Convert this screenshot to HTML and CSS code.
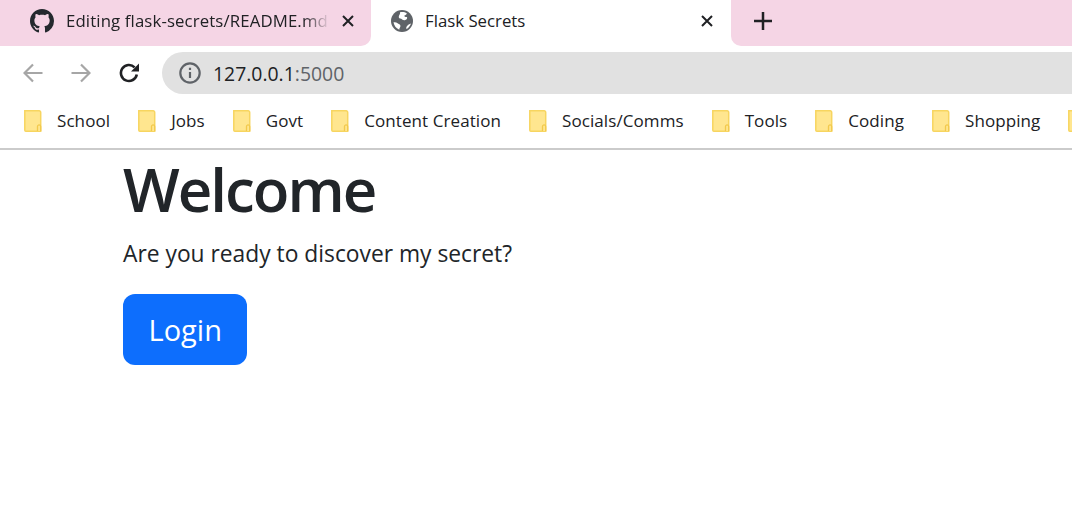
FILE: index.html
```html
<!DOCTYPE html>
<html lang="en">
<head>
<meta charset="utf-8">
<title>Flask Secrets</title>
<link rel="stylesheet" href="styles.css">
</head>
<body>
<header class="chrome">
  <div class="tabstrip">
    <div class="tab tab-inactive">
      <svg class="favicon" viewBox="0 0 16 16"><path fill="#24292e" d="M8 0C3.58 0 0 3.58 0 8c0 3.54 2.29 6.53 5.47 7.59.4.07.55-.17.55-.38 0-.19-.01-.82-.01-1.49-2.01.37-2.53-.49-2.69-.94-.09-.23-.48-.94-.82-1.13-.28-.15-.68-.52-.01-.53.63-.01 1.08.58 1.23.82.72 1.21 1.87.87 2.33.66.07-.52.28-.87.51-1.07-1.78-.2-3.64-.89-3.64-3.95 0-.87.31-1.59.82-2.15-.08-.2-.36-1.02.08-2.12 0 0 .67-.21 2.2.82.64-.18 1.32-.27 2-.27s1.36.09 2 .27c1.53-1.04 2.2-.82 2.2-.82.44 1.1.16 1.92.08 2.12.51.56.82 1.27.82 2.15 0 3.07-1.87 3.75-3.65 3.95.29.25.54.73.54 1.48 0 1.07-.01 1.93-.01 2.2 0 .21.15.46.55.38A8.01 8.01 0 0 0 16 8c0-4.42-3.58-8-8-8z"/></svg>
      <span class="tab-title tab-title-long">Editing flask-secrets/README.md</span>
      <svg class="close" viewBox="0 0 12 12"><path d="M1 1l10 10M11 1L1 11"/></svg>
    </div>
    <div class="tab tab-active">
      <svg class="favicon globe" viewBox="0 0 22 22"><circle cx="11" cy="11" r="11" fill="#5f6368"/><path fill="#fff" d="M9 2.2c2.2-.6 5-.3 6.8 1-.3 1.500-1.400 2-2.400 2.300-.3 1.300 1 1.500 2.400 1.500 1.100 1.200-.5 3.100-2 3.200-2.300.2-2.900-1.300-4.600-1.600-1.400-.2-1.700-1.600-1.200-2.900C8.300 4.800 9.400 3.700 9 2.200zM2.500 12.300c1.500-.4 3-.1 4.100 1 1 1 2.300.9 2.700 2 .4 1.300-.3 2.300-.9 3.100.3 1-.1 1.300-.5 1.100-2.800-1-4.900-4-5.400-7.200zM20 13.500c-.6 2.200-2.300 4.300-4.300 5.400-.8-.6-.5-2 .4-3 .7-1 2.200-2 3.900-2.400z"/></svg>
      <span class="tab-title">Flask Secrets</span>
      <svg class="close" viewBox="0 0 12 12"><path d="M1 1l10 10M11 1L1 11"/></svg>
    </div>
    <div class="tab-rest">
      <svg class="plus" viewBox="0 0 18 18"><path d="M9 0v18M0 9h18"/></svg>
    </div>
  </div>
  <div class="toolbar">
    <svg class="nav nav-off" viewBox="0 0 20 20"><path d="M19.500 10H2M10 1.500L1.500 10l8.500 8.500"/></svg>
    <svg class="nav nav-off" viewBox="0 0 20 20"><path d="M.5 10H18M10 1.500l8.500 8.500-8.500 8.500"/></svg>
    <svg class="nav nav-on" viewBox="0 0 20 20"><path class="reload-arc" d="M17.800 11.500A8 8 0 1 1 15.600 4.300"/><path class="reload-head" d="M20 .5v8h-8z"/></svg>
    <div class="omnibox">
      <svg class="info" viewBox="0 0 20 20"><circle cx="10" cy="10" r="8.800"/><path d="M10 9v5.500M10 5.200v2"/></svg>
      <span class="url">127.0.0.1<span class="port">:5000</span></span>
    </div>
  </div>
  <nav class="bookmarks">
    <a class="bookmark"><svg class="folder" viewBox="0 0 18 22"><use href="#f"/></svg><span class="bookmark-label">School</span></a>
    <a class="bookmark"><svg class="folder" viewBox="0 0 18 22"><use href="#f"/></svg><span class="bookmark-label">Jobs</span></a>
    <a class="bookmark"><svg class="folder" viewBox="0 0 18 22"><use href="#f"/></svg><span class="bookmark-label">Govt</span></a>
    <a class="bookmark"><svg class="folder" viewBox="0 0 18 22"><use href="#f"/></svg><span class="bookmark-label">Content Creation</span></a>
    <a class="bookmark"><svg class="folder" viewBox="0 0 18 22"><use href="#f"/></svg><span class="bookmark-label">Socials/Comms</span></a>
    <a class="bookmark"><svg class="folder" viewBox="0 0 18 22"><use href="#f"/></svg><span class="bookmark-label">Tools</span></a>
    <a class="bookmark"><svg class="folder" viewBox="0 0 18 22"><use href="#f"/></svg><span class="bookmark-label">Coding</span></a>
    <a class="bookmark"><svg class="folder" viewBox="0 0 18 22"><use href="#f"/></svg><span class="bookmark-label">Shopping</span></a>
    <a class="bookmark"><svg class="folder" viewBox="0 0 18 22"><use href="#f"/></svg></a>
  </nav>
  <svg class="defs" width="0" height="0"><defs><g id="f"><path fill="#ffe68f" stroke="#f7d560" stroke-width="1.500" d="M.8.8h14.400a1.500 1.500 0 0 1 1.500 1.500v18.900H1.800a1 1 0 0 1-1-1z"/><path fill="#ffe68f" stroke="#f2c94c" stroke-width="1.300" d="M13.500 21v-4.500a1.600 1.600 0 0 1 3.200 0V21"/></g></defs></svg>
</header>
<main class="content">
  <h1 class="title">Welcome</h1>
  <p class="lead">Are you ready to discover my secret?</p>
  <a class="btn">Login</a>
</main>
</body>
</html>
```
FILE: styles.css
```css
* { box-sizing: border-box; }
html, body { margin: 0; height: 100%; overflow: hidden; background: #fff; }
body { font-family: "Open Sans", "Noto Sans", sans-serif; color: #212529; }
.chrome { height: 150px; border-bottom: 2px solid #cbcbcb; }
.tabstrip { display: flex; height: 46px; color: #202124; }
.tab { display: flex; align-items: center; padding-bottom: 4px; }
.tab-inactive { width: 371px; padding-left: 30px; background: #f5d5e5; border-radius: 0 0 10px 0; }
.tab-active { width: 360px; padding-left: 20px; background: #fff; }
.tab-rest { flex: 1; display: flex; align-items: center; padding: 0 0 4px 23px; background: #f5d5e5; border-radius: 0 0 0 10px; }
.favicon { width: 24px; height: 24px; flex: none; }
.globe { width: 22px; height: 22px; }
.tab-title { margin-left: 12px; padding-bottom: 2px; font-size: 16.800px; white-space: nowrap; overflow: hidden; width: 264px; }
.tab-title-long { letter-spacing: .12px; -webkit-mask-image: linear-gradient(to right, #000 90%, transparent 100%); mask-image: linear-gradient(to right, #000 90%, transparent 100%); }
.close { width: 12px; height: 12px; margin-left: 12px; flex: none; fill: none; stroke: #202124; stroke-width: 2; }
.plus { width: 18px; height: 18px; fill: none; stroke: #202124; stroke-width: 2.500; }
.toolbar { display: flex; align-items: center; height: 54px; padding: 6px 0 6px 23px; }
.nav { width: 20px; height: 20px; flex: none; margin-right: 28px; fill: none; stroke-width: 2.200; }
.nav-off { stroke: #a6a6a6; }
.nav-on { stroke: #202124; margin-right: 23px; }
.reload-arc { fill: none; stroke-width: 2.600; }
.reload-head { fill: #202124; stroke: none; }
.omnibox { flex: 1; height: 42px; display: flex; align-items: center; padding-left: 17px; background: #e1e1e1; border-radius: 21px 0 0 21px; }
.info { width: 22px; height: 22px; flex: none; fill: none; stroke: #5f6368; stroke-width: 2; }
.url { margin-left: 12px; font-size: 19.400px; color: #202124; }
.port { color: #5f6368; }
.bookmarks { display: flex; align-items: center; height: 48px; padding: 0 0 6px 24px; gap: 28px; overflow: hidden; }
.bookmark { display: flex; align-items: center; flex: none; font-size: 17px; letter-spacing: .08px; color: #202124; }
.bookmark-label { padding-bottom: 2px; }
.folder { width: 18px; height: 22px; margin-right: 15px; flex: none; }
.defs { position: absolute; }
.content { padding: 3px 0 0 123px; }
.title { margin: 0; font-size: 60px; font-weight: 600; line-height: 72px; letter-spacing: -2px; }
.lead { margin: 11px 0 22px; font-size: 22.800px; line-height: 36px; }
.btn { display: inline-block; padding: 12px 25.500px; font-size: 29px; line-height: 47px; color: #fff; background: #0d6efd; border-radius: 12px; }
```
